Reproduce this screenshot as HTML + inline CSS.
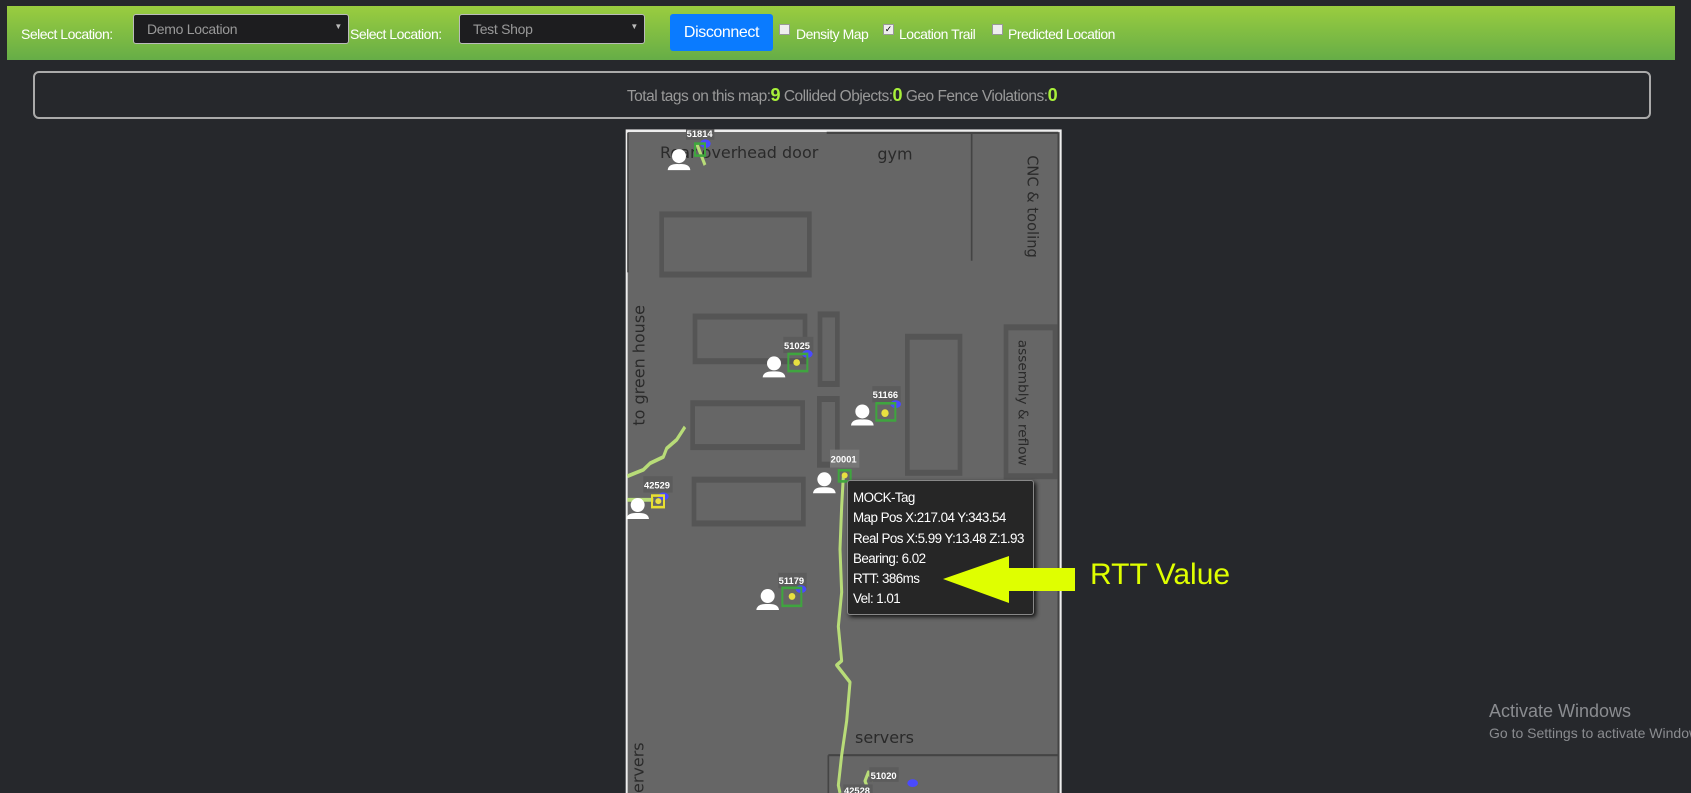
<!DOCTYPE html>
<html><head><meta charset="utf-8"><style>
body{margin:0;width:1691px;height:793px;background:#26282c;overflow:hidden;position:relative;font-family:"Liberation Sans",sans-serif;}
.hdr{position:absolute;left:7px;top:6px;width:1668px;height:54px;background:linear-gradient(#9acd3f,#66ad47);}
.t{position:absolute;color:#fff;font-size:14px;letter-spacing:-0.5px;}
.sel{position:absolute;top:14px;height:30px;background:#1d1d1f;border:1px solid #bbb;border-radius:3px;box-sizing:border-box;color:#999;font-size:14px;line-height:28px;padding-left:13px;letter-spacing:-0.3px;}
.sel:after{content:"▼";position:absolute;right:6px;top:0;font-size:8px;color:#bbb;line-height:24px;}
.btn{position:absolute;left:670px;top:14px;width:103px;height:37px;background:#0a7bff;color:#fff;border-radius:3px;font-size:16px;line-height:37px;text-align:center;letter-spacing:-0.4px;}
.cb{position:absolute;top:24px;width:9px;height:9px;background:#eee;border:1px solid #999;font-size:9px;line-height:9px;color:#000;text-align:center;}
.stats{position:absolute;left:33px;top:71px;width:1618px;height:48px;border:2px solid #aaa;border-radius:6px;box-sizing:border-box;text-align:center;line-height:44px;color:#999;font-size:15.5px;letter-spacing:-0.5px;}
.stats b{color:#a8f03a;font-size:18px;}
.tip{position:absolute;left:847px;top:480px;width:187px;height:135px;background:#262626;border:1px solid #888;border-radius:3px;box-shadow:2px 2px 4px #111;color:#fff;font-size:13.4px;line-height:20.3px;padding:7px 0 0 5px;box-sizing:border-box;letter-spacing:-0.55px;white-space:nowrap;}
</style></head><body>
<div class="hdr"></div>
<div class="t" style="left:21px;top:26px">Select Location:</div>
<div class="sel" style="left:133px;width:216px">Demo Location</div>
<div class="t" style="left:350px;top:26px">Select Location:</div>
<div class="sel" style="left:459px;width:186px">Test Shop</div>
<div class="btn">Disconnect</div>
<div class="cb" style="left:779px"></div><div class="t" style="left:796px;top:26px">Density Map</div>
<div class="cb" style="left:883px">✓</div><div class="t" style="left:899px;top:26px">Location Trail</div>
<div class="cb" style="left:992px"></div><div class="t" style="left:1008px;top:26px">Predicted Location</div>
<div class="stats">Total tags on this map:<b>9</b> Collided Objects:<b>0</b> Geo Fence Violations:<b>0</b></div>

<svg style="position:absolute;left:620px;top:120px" width="450" height="673" viewBox="0 0 1350 1568" preserveAspectRatio="none">
<rect x="20" y="25" width="1302" height="1600" fill="#666" stroke="#eee" stroke-width="6"/>
<g fill="none" stroke="#555" stroke-width="14">
<rect x="125" y="220" width="443" height="140"/>
<rect x="225" y="458" width="330" height="104"/>
<rect x="218" y="660" width="330" height="102"/>
<rect x="222" y="838" width="328" height="102"/>
<rect x="600" y="453" width="52" height="162"/>
<rect x="598" y="650" width="54" height="153"/>
<rect x="862" y="505" width="158" height="317"/>
<rect x="1158" y="483" width="147" height="347"/>
</g>
<g stroke="#444" stroke-width="5" fill="none">
<line x1="620" y1="30" x2="1315" y2="30"/>
<line x1="1055" y1="30" x2="1055" y2="328"/>
<line x1="1315" y1="30" x2="1315" y2="1568"/>
<line x1="625" y1="1480" x2="1315" y2="1480"/>
<line x1="625" y1="1480" x2="625" y2="1568"/>
<line x1="24" y1="30" x2="24" y2="355"/>
</g>
<g font-family="DejaVu Sans, sans-serif" font-size="48" fill="#2a2a2a">
<g transform="translate(120,88) scale(1,0.7766)"><text>Rear overhead door</text></g>
<g transform="translate(772,92) scale(1,0.7766)"><text>gym</text></g>
<g transform="translate(705,1452) scale(1,0.7766)"><text>servers</text></g>
<g transform="translate(1222,82) scale(1,0.7766) rotate(90)"><text font-size="44">CNC &amp; tooling</text></g>
<g transform="translate(1196,512) scale(1,0.7766) rotate(90)"><text font-size="41">assembly &amp; reflow</text></g>
<g transform="translate(74,712) scale(1,0.7766) rotate(-90)"><text>to green house</text></g>
<g transform="translate(70,1568) scale(1,0.7766) rotate(-90)"><text>ervers</text></g>
</g>
<g fill="none" stroke="#b8dc78" stroke-width="9" stroke-linejoin="round">
<polyline points="22,830 70,815 90,800 130,785 140,765 170,745 195,715"/>
<polyline points="22,885 100,885"/>
<polyline points="670,830 665,900 660,1000 665,1100 655,1180 665,1260 650,1270 690,1310 680,1400 665,1480 655,1550 660,1568"/>
<polyline points="740,1550 735,1540 745,1520 760,1540"/>
<polyline points="230,55 255,105"/>
</g>
<g font-family="Liberation Sans, sans-serif" font-weight="bold" font-size="28" fill="#fff">
<rect x="198" y="22" width="85" height="24" fill="#5c5c5c"/><g transform="translate(200,40) scale(1,0.7766)"><text>51814</text></g>
<rect x="490" y="505" width="90" height="38" fill="#5c5c5c"/><g transform="translate(492,533) scale(1,0.7766)"><text>51025</text></g>
<rect x="757" y="620" width="85" height="38" fill="#5c5c5c"/><g transform="translate(758,648) scale(1,0.7766)"><text>51166</text></g>
<rect x="630" y="768" width="88" height="42" fill="#777"/><g transform="translate(632,798) scale(1,0.7766)"><text>20001</text></g>
<rect x="70" y="830" width="88" height="38" fill="#5c5c5c"/><g transform="translate(72,858) scale(1,0.7766)"><text>42529</text></g>
<rect x="475" y="1055" width="85" height="36" fill="#5c5c5c"/><g transform="translate(476,1081) scale(1,0.7766)"><text>51179</text></g>
<rect x="748" y="1508" width="88" height="34" fill="#5c5c5c"/><g transform="translate(752,1535) scale(1,0.7766)"><text>51020</text></g>
<rect x="670" y="1548" width="88" height="34" fill="#5c5c5c"/><g transform="translate(672,1570) scale(1,0.7766)"><text>42528</text></g>
</g>
<g fill="#4a4aff">
<ellipse cx="256" cy="55" rx="16" ry="10"/><ellipse cx="562" cy="545" rx="16" ry="9"/><ellipse cx="827" cy="662" rx="16" ry="9"/><ellipse cx="130" cy="877" rx="16" ry="9"/><ellipse cx="543" cy="1093" rx="16" ry="9"/><ellipse cx="878" cy="1545" rx="16" ry="9"/>
</g>
<g fill="none" stroke="#3fa53f" stroke-width="6">
<rect x="505" y="545" width="57" height="40"/><rect x="769" y="660" width="57" height="40"/><rect x="656" y="816" width="36" height="26"/><rect x="487" y="1090" width="57" height="42"/><rect x="225" y="55" width="30" height="28"/>
</g>
<rect x="96" y="875" width="36" height="27" fill="none" stroke="#e8e030" stroke-width="6"/>
<g fill="#e8e040"><ellipse cx="530" cy="565" rx="10" ry="8"/><ellipse cx="795" cy="683" rx="11" ry="9"/><ellipse cx="674" cy="828" rx="9" ry="7"/><ellipse cx="115" cy="888" rx="9" ry="7"/><ellipse cx="516" cy="1110" rx="10" ry="8"/></g>
<g fill="#fff">
<g transform="translate(462,578) scale(1,0.7766)"><circle r="21" cy="-14"/><path d="M-34,28 Q-32,8 0,10 Q32,8 34,28Z"/></g>
<g transform="translate(727,690) scale(1,0.7766)"><circle r="21" cy="-14"/><path d="M-34,28 Q-32,8 0,10 Q32,8 34,28Z"/></g>
<g transform="translate(613,848) scale(1,0.7766)"><circle r="21" cy="-14"/><path d="M-34,28 Q-32,8 0,10 Q32,8 34,28Z"/></g>
<g transform="translate(53,908) scale(1,0.7766)"><circle r="21" cy="-14"/><path d="M-34,28 Q-32,8 0,10 Q32,8 34,28Z"/></g>
<g transform="translate(443,1120) scale(1,0.7766)"><circle r="21" cy="-14"/><path d="M-34,28 Q-32,8 0,10 Q32,8 34,28Z"/></g>
<g transform="translate(177,95) scale(1,0.7766)"><circle r="21" cy="-14"/><path d="M-34,28 Q-32,8 0,10 Q32,8 34,28Z"/></g>
</g>
</svg>

<div class="tip">MOCK-Tag<br>Map Pos X:217.04 Y:343.54<br>Real Pos X:5.99 Y:13.48 Z:1.93<br>Bearing: 6.02<br>RTT: 386ms<br>Vel: 1.01</div>
<svg style="position:absolute;left:0;top:0" width="1691" height="793"><polygon points="943,579 1009,556 1009,568 1075,568 1075,591 1009,591 1009,603" fill="#dfff00"/></svg>
<div style="position:absolute;left:1090px;top:558px;color:#dfff00;font-size:30px;">RTT Value</div>
<div style="position:absolute;left:1489px;top:701px;color:#8a8c90;font-size:18px;">Activate Windows</div>
<div style="position:absolute;left:1489px;top:725px;color:#8a8c90;font-size:14px;white-space:nowrap;">Go to Settings to activate Windows.</div>
</body></html>
